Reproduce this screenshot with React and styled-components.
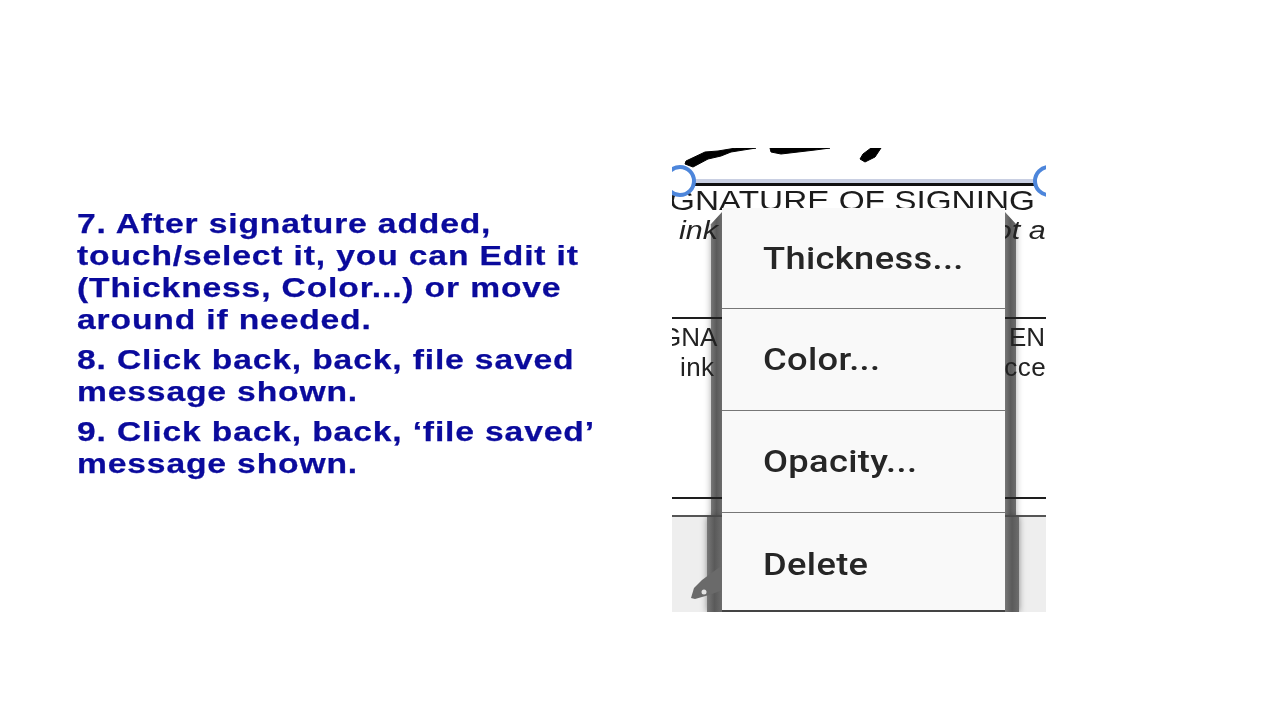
import React from "react";
import styled, { createGlobalStyle } from "styled-components";

const Global = createGlobalStyle`
  html, body { margin: 0; padding: 0; background: #fff; }
`;

const Page = styled.div`
  width: 1280px;
  height: 720px;
  overflow: hidden;
  background: #fff;
  display: flex;
  align-items: flex-start;
`;

const Steps = styled.div`
  width: 595px;
  margin: 208px 0 0 77px;
  display: flex;
  flex-direction: column;
  gap: 8px;
  flex: none;
  filter: blur(0.3px);
`;

const Step = styled.p`
  margin: 0;
  width: 500px;
  transform: scaleX(1.2);
  transform-origin: left top;
  font: 700 28px/32px "Liberation Sans", Arial, sans-serif;
  letter-spacing: 0.72px;
  -webkit-text-stroke: 0.25px #0a0a9c;
  color: #0a0a9c;
  white-space: pre-line;
`;

const Shot = styled.div`
  position: relative;
  width: 374px;
  height: 464px;
  margin: 148px 0 0 0;
  overflow: hidden;
  flex: none;
  display: flex;
  flex-direction: column;
  font-family: "Liberation Sans", Arial, sans-serif;
  color: #222;
  filter: blur(0.3px);
`;

const Signature = styled.svg`
  display: block;
  width: 374px;
  height: 31px;
  flex: none;
`;

const SignLine = styled.div`
  height: 7px;
  flex: none;
  display: flex;
  flex-direction: column;
  background: #c9cfe2;
  &::after {
    content: "";
    margin-top: 4px;
    height: 3px;
    background: #111;
  }
`;

const Handle = styled.div`
  position: absolute;
  top: 17px;
  left: ${(p) => p.$x}px;
  width: 24px;
  height: 24px;
  border-radius: 50%;
  border: 4px solid #4d86db;
  background: #fff;
`;

const Title = styled.div`
  position: relative;
  height: 26px;
  flex: none;
  font-size: 28px;
  line-height: 30px;
  margin-left: -3px;
  white-space: nowrap;
  color: #1c1c1c;
  transform: scaleX(1.19);
  transform-origin: left top;
`;

const TextRow = styled.div`
  position: relative;
  display: flex;
  justify-content: space-between;
  white-space: nowrap;
  height: ${(p) => p.$h}px;
  margin-top: ${(p) => p.$mt || 0}px;
  padding: 0 ${(p) => p.$pr || 0}px 0 ${(p) => p.$pl || 0}px;
  flex: none;
  font-size: ${(p) => p.$size}px;
  line-height: ${(p) => p.$h}px;
  font-style: ${(p) => (p.$italic ? "italic" : "normal")};
  letter-spacing: ${(p) => p.$ls || 0}px;
`;

const Wide = styled.span`
  display: inline-block;
  transform: scaleX(1.22);
  transform-origin: ${(p) => p.$origin};
`;

const ClippedWord = styled.span`
  margin-left: -11px;
`;

const Rule = styled.div`
  position: relative;
  height: ${(p) => p.$h || 2}px;
  flex: none;
  background: ${(p) => p.$c || "#1e1e1e"};
  margin-top: ${(p) => p.$mt}px;
`;

const GreyFloor = styled.div`
  flex: 1;
  background: #eeeeee;
`;

const Bar = styled.div`
  position: absolute;
  top: ${(p) => p.$top}px;
  bottom: 0;
  left: ${(p) => p.$x}px;
  width: ${(p) => p.$w}px;
  background: linear-gradient(90deg, #777 0%, #5a5a5a 50%, #6c6c6c 100%);
  box-shadow: 0 0 7px rgba(0, 0, 0, 0.35);
  clip-path: ${(p) => p.$clip || "none"};
`;

const Menu = styled.div`
  position: absolute;
  left: 50px;
  top: 60px;
  width: 283px;
  height: 404px;
  display: flex;
  flex-direction: column;
  background: #f9f9f9;
  border-bottom: 2px solid #444;
  box-sizing: border-box;
`;

const Item = styled.div`
  height: ${(p) => p.$h}px;
  box-sizing: border-box;
  flex: none;
  display: flex;
  align-items: center;
  padding: ${(p) => (p.$last ? 5 : 0)}px 0 0 41px;
  border-bottom: ${(p) => (p.$last ? "none" : "1.5px solid #777")};
`;

const ItemLabel = styled.span`
  display: inline-block;
  font: 500 31px "Roboto", "Liberation Sans", sans-serif;
  letter-spacing: 0.3px;
  color: #262626;
  transform: scaleX(1.17);
  transform-origin: left center;
`;

const Pen = styled.svg`
  position: absolute;
  left: 18px;
  top: 416px;
  width: 33px;
  height: 38px;
`;

const items = [
  { label: "Thickness...", h: 101 },
  { label: "Color...", h: 102 },
  { label: "Opacity...", h: 102 },
  { label: "Delete", h: 97, last: true },
];

export default function App() {
  return (
    <Page>
      <Global />
      <Steps>
        <Step>{"7. After signature added,\ntouch/select it, you can Edit it\n(Thickness, Color...) or move\naround if needed."}</Step>
        <Step>{"8. Click back, back, file saved\nmessage shown."}</Step>
        <Step>{"9. Click back, back, ‘file saved’\nmessage shown."}</Step>
      </Steps>
      <Shot>
        <Bar $top={64} $x={39} $w={11} $clip="polygon(-10px 12px, 0 12px, 11px 0, 11px 100%, -10px 100%)" />
        <Bar $top={64} $x={333} $w={11} $clip="polygon(0 0, 11px 12px, 21px 12px, 21px 100%, 0 100%)" />
        <Signature viewBox="0 0 374 31">
          <g fill="#000" stroke="#000" strokeWidth="1" strokeLinejoin="round">
            <path d="M14 13 L33 4 L46 3 L64 0 L84 0 L59 4 L49 8 L36 11 L21 19 L13 16 Z" />
            <path d="M98 0 L158 0 L143 2 L109 6 L99 4 Z" />
            <path d="M199 0 L209 0 L203 9 L193 14 L188 11 L191 6 Z" />
          </g>
        </Signature>
        <SignLine />
        <Title>GNATURE OF SIGNING</Title>
        <TextRow $h={30} $size={25} $italic $pl={7} $mt={3}>
          <Wide $origin="left center">ink</Wide>
          <Wide $origin="right center">ot a</Wide>
        </TextRow>
        <Rule $mt={72} />
        <TextRow $h={30} $size={26} $mt={3} $pr={1}>
          <ClippedWord>GNA</ClippedWord>
          <span>EN</span>
        </TextRow>
        <TextRow $h={30} $size={26} $pl={8} $ls={0.4}>
          <span>ink</span>
          <span>cce</span>
        </TextRow>
        <Rule $mt={115} />
        <Rule $mt={16} $h={2} $c="#555" />
        <GreyFloor />
        <Bar $top={369} $x={35} $w={15} />
        <Bar $top={369} $x={333} $w={14} />
        <Pen viewBox="0 0 33 38">
          <path d="M1 34 L4 24 L12 16 L27 5 L33 1 L33 26 L19 31 L5 35 Z" fill="#6a6a6a" />
          <circle cx="14" cy="28" r="2.5" fill="#e4e4e4" />
        </Pen>
        <Handle $x={-8} />
        <Handle $x={361} />
        <Menu>
          {items.map((it) => (
            <Item key={it.label} $h={it.h} $last={it.last}>
              <ItemLabel>{it.label}</ItemLabel>
            </Item>
          ))}
        </Menu>
      </Shot>
    </Page>
  );
}
